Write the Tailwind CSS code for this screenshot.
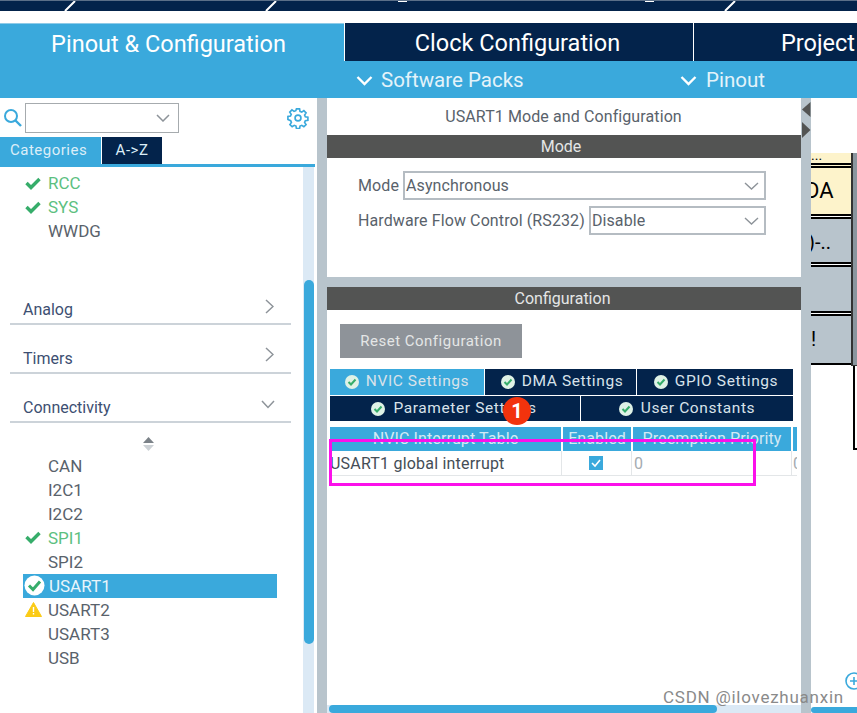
<!DOCTYPE html>
<html lang="en">

<head>
  <meta charset="UTF-8" />
  <meta name="viewport" content="width=device-width, initial-scale=1.0" />
  <script src="https://cdn.jsdelivr.net/npm/@tailwindcss/browser@4"></script>
  <title>Pinout &amp; Configuration</title>
</head>

<body class="w-[857px] h-[713px] overflow-hidden bg-white font-['Roboto',sans-serif] text-[#59626b] relative">
  <!-- top strip -->
  <div class="h-[11px] bg-[#03234b] border-t border-[#5b6f88]">
    <svg width="857" height="10" class="block">
      <path d="M65 10 L75 0 M266 10 L276 0 M725 10 L735 0" stroke="#fff" stroke-width="2" fill="none" />
      <rect x="398" y="0" width="9" height="1" fill="#fff" />
      <rect x="645" y="0" width="9" height="1" fill="#fff" />
    </svg>
  </div>
  <div class="h-[12px]"></div>

  <!-- main tabs -->
  <div class="flex h-[38px] text-[23.5px] leading-[40px]">
    <div class="w-[344px] bg-[#3aa9dc] text-white text-center border-t border-[#8fcbe8] pr-[7px]">Pinout &amp; Configuration</div>
    <div class="w-[349px] bg-[#03234b] text-white text-center border-l border-white pr-[3px]">Clock Configuration</div>
    <div class="flex-1 bg-[#03234b] text-white border-l border-white pl-[87px] whitespace-nowrap overflow-hidden">Project Manager</div>
  </div>
  <div class="h-[37px] pt-[2px] bg-[#3aa9dc] text-[#e4f3fa] text-[20.5px] leading-[35px] relative flex">
    <div class="flex items-center gap-[8px] ml-[356px] w-[324px]">
      <svg width="17" height="11" viewBox="0 0 17 11"><path d="M1.5 2 L8.5 9 L15.5 2" stroke="#fff" stroke-width="2.4" fill="none" /></svg>
      <span>Software Packs</span>
    </div>
    <div class="flex items-center gap-[9px]">
      <svg width="17" height="11" viewBox="0 0 17 11"><path d="M1.5 2 L8.5 9 L15.5 2" stroke="#fff" stroke-width="2.4" fill="none" /></svg>
      <span>Pinout</span>
    </div>
  </div>

  <div class="flex h-[615px]">
    <!-- left panel -->
    <div class="w-[317px] flex flex-col relative">
      <div class="h-[39px] flex items-center pl-[3px] pr-[8px]">
        <svg width="19" height="20" viewBox="0 0 19 20" class="mr-[3px]">
          <circle cx="8" cy="8" r="6" stroke="#3aa9dc" stroke-width="2" fill="none" />
          <path d="M12.5 12.5 L18 18" stroke="#3aa9dc" stroke-width="2.4" />
        </svg>
        <div class="w-[154px] h-[30px] border border-[#a6abae] flex items-center justify-end pr-[8px]">
          <svg width="14" height="8" viewBox="0 0 14 8"><path d="M1 1 L7 7 L13 1" stroke="#8d9399" stroke-width="1.5" fill="none" /></svg>
        </div>
        <svg width="22" height="22" viewBox="0 0 24 24" class="ml-auto" fill="none" stroke="#3aa9dc" stroke-width="1.8">
          <circle cx="12" cy="12" r="3.2" />
          <path d="M10.3 2h3.4l.5 2.8 1.9.8 2.3-1.6 2.4 2.4-1.6 2.3.8 1.9 2.8.5v3.4l-2.8.5-.8 1.9 1.6 2.3-2.4 2.4-2.3-1.6-1.9.8-.5 2.8h-3.4l-.5-2.8-1.9-.8-2.3 1.6-2.4-2.4 1.6-2.3-.8-1.9L1 13.7v-3.4l2.8-.5.8-1.9L3 5.6l2.4-2.4 2.3 1.6 1.9-.8z" />
        </svg>
      </div>
      <div class="flex h-[27px] text-[15px] leading-[27px] tracking-[0.5px] text-[#dceef8]">
        <div class="w-[101px] bg-[#3aa9dc] pl-[10px]">Categories</div>
        <div class="w-[61px] bg-[#03234b] border-l border-white text-center">A-&gt;Z</div>
      </div>
      <div class="h-[3px] w-[315px] bg-[#3aa9dc]"></div>

      <div class="flex-1 flex relative">
        <div class="flex-1 text-[17px]">
          <ul class="pt-[4px] leading-[24px] h-[109px]">
            <li class="relative pl-[48px] text-[#5cc07f]">
              <svg class="absolute left-[25px] top-[6px]" width="16" height="13" viewBox="0 0 16 13"><path d="M1.5 6 L6 10.5 L14.5 2" stroke="#36ad6a" stroke-width="3.4" fill="none" /></svg>RCC
            </li>
            <li class="relative pl-[48px] text-[#5cc07f]">
              <svg class="absolute left-[25px] top-[6px]" width="16" height="13" viewBox="0 0 16 13"><path d="M1.5 6 L6 10.5 L14.5 2" stroke="#36ad6a" stroke-width="3.4" fill="none" /></svg>SYS
            </li>
            <li class="pl-[48px]">WWDG</li>
          </ul>

          <div class="ml-[10px] w-[281px] h-[49px] border-b-2 border-[#ccd3d9] flex items-end justify-between pl-[13px] pr-[17px] text-[16px] leading-[26px] text-[#3d4f72]">
            <span>Analog</span>
            <svg class="mb-[9px]" width="9" height="15" viewBox="0 0 9 15"><path d="M1 1 L8 7.5 L1 14" stroke="#8d9399" stroke-width="1.5" fill="none" /></svg>
          </div>
          <div class="ml-[10px] w-[281px] h-[49px] border-b-2 border-[#ccd3d9] flex items-end justify-between pl-[13px] pr-[17px] text-[16px] leading-[26px] text-[#3d4f72]">
            <span>Timers</span>
            <svg class="mb-[10px]" width="9" height="15" viewBox="0 0 9 15"><path d="M1 1 L8 7.5 L1 14" stroke="#8d9399" stroke-width="1.5" fill="none" /></svg>
          </div>
          <div class="ml-[10px] w-[281px] h-[49px] border-b-2 border-[#ccd3d9] flex items-end justify-between pl-[13px] pr-[16px] text-[16px] leading-[26px] text-[#3d4f72]">
            <span>Connectivity</span>
            <svg class="mb-[12px]" width="14" height="9" viewBox="0 0 14 9"><path d="M1 1 L7 7.5 L13 1" stroke="#8d9399" stroke-width="1.5" fill="none" /></svg>
          </div>

          <svg class="ml-[143px] mt-[14px] block" width="11" height="15" viewBox="0 0 11 15">
            <path d="M5.5 0 L11 6 H0 Z" fill="#7b8288" />
            <path d="M5.5 14 L11 8 H0 Z" fill="#cdd2d6" />
          </svg>

          <ul class="leading-[24px] mt-[2px] w-[277px]">
            <li class="pl-[48px]">CAN</li>
            <li class="pl-[48px]">I2C1</li>
            <li class="pl-[48px]">I2C2</li>
            <li class="relative pl-[48px] text-[#5cc07f]">
              <svg class="absolute left-[25px] top-[5px]" width="16" height="13" viewBox="0 0 16 13"><path d="M1.5 6 L6 10.5 L14.5 2" stroke="#36ad6a" stroke-width="3.4" fill="none" /></svg>SPI1
            </li>
            <li class="pl-[48px]">SPI2</li>
            <li class="relative ml-[23px] pl-[26px] bg-[#3aa9dc] text-[#e8f5fb]">
              <svg class="absolute left-[1px] top-[1px]" width="21" height="21" viewBox="0 0 21 21">
                <circle cx="10.5" cy="10.5" r="10" fill="#fff" />
                <path d="M5 10.5 L9 14.5 L16 6.5" stroke="#36ad6a" stroke-width="3" fill="none" />
              </svg>USART1
            </li>
            <li class="relative pl-[48px]">
              <svg class="absolute left-[25px] top-[4px]" width="17" height="15" viewBox="0 0 17 15">
                <path d="M8.5 0.5 L16.5 14.5 H0.5 Z" fill="#fbcb16" stroke="#fbcb16" stroke-linejoin="round" />
                <rect x="7.8" y="5" width="1.4" height="5" fill="#fff" />
                <rect x="7.8" y="11" width="1.4" height="1.5" fill="#fff" />
              </svg>USART2
            </li>
            <li class="pl-[48px]">USART3</li>
            <li class="pl-[48px]">USB</li>
          </ul>
        </div>
        <!-- list scrollbar -->
        <div class="w-[11px] mr-[3px] bg-[#dbe9f5] relative">
          <div class="absolute top-[113px] left-[1px] w-[10px] h-[364px] rounded-[5px] bg-[#3aa9dc]"></div>
        </div>
      </div>
    </div>

    <!-- splitter -->
    <div class="w-[10px] bg-[#b8c4cc]"></div>

    <!-- center panel -->
    <div class="w-[474px] flex flex-col relative">
      <div class="h-[179px]">
        <div class="h-[37px] text-center text-[16px] leading-[37px] tracking-[0.1px] pr-[1px]">USART1 Mode and Configuration</div>
        <div class="h-[23px] bg-[#535453] text-center text-[#e4e6e6] text-[16px] leading-[23px] pr-[6px]">Mode</div>
        <div class="flex items-center h-[29px] mt-[13px] text-[16px] tracking-[0.1px] pl-[31px]">
          <span class="mr-[4px]">Mode</span>
          <div class="w-[363px] h-[29px] border-2 border-[#b5bcc2] flex items-center justify-between pl-[1px] pr-[5px]">
            <span>Asynchronous</span>
            <svg width="15" height="8" viewBox="0 0 15 8"><path d="M1 1 L7.5 7 L14 1" stroke="#8d9399" stroke-width="1.4" fill="none" /></svg>
          </div>
        </div>
        <div class="flex items-center h-[29px] mt-[6px] text-[16px] tracking-[0.1px] pl-[31px]">
          <span class="mr-[4px]">Hardware Flow Control (RS232)</span>
          <div class="w-[177px] h-[29px] border-2 border-[#b5bcc2] flex items-center justify-between pl-[1px] pr-[5px]">
            <span>Disable</span>
            <svg width="15" height="8" viewBox="0 0 15 8"><path d="M1 1 L7.5 7 L14 1" stroke="#8d9399" stroke-width="1.4" fill="none" /></svg>
          </div>
        </div>
      </div>
      <div class="h-[10px] bg-[#b8c4cc]"></div>
      <div class="h-[23px] bg-[#535453] text-center text-[#e4e6e6] text-[16px] leading-[23px] pr-[3px]">Configuration</div>

      <div class="h-[14px]"></div>
      <div class="ml-[13px] w-[182px] h-[34px] bg-[#8e9399] text-[#e4e6e6] text-[15px] leading-[34px] text-center tracking-[0.5px]">Reset Configuration</div>

      <!-- config tabs -->
      <div class="mt-[11px] ml-[3px] w-[463px] text-[15.5px] tracking-[0.6px] text-[#d8e2ea]">
        <div class="flex h-[26px]">
          <div class="w-[154px] bg-[#3aa9dc] flex items-center justify-center gap-[7px]">
            <svg width="14" height="14" viewBox="0 0 14 14"><circle cx="7" cy="7" r="7" fill="#dff2e6" /><path d="M3.5 7 L6 9.5 L10.5 4.5" stroke="#36ad6a" stroke-width="2" fill="none" /></svg>
            NVIC Settings
          </div>
          <div class="w-[152px] pl-[3px] bg-[#03234b] border-l border-white flex items-center justify-center gap-[7px]">
            <svg width="14" height="14" viewBox="0 0 14 14"><circle cx="7" cy="7" r="7" fill="#dff2e6" /><path d="M3.5 7 L6 9.5 L10.5 4.5" stroke="#36ad6a" stroke-width="2" fill="none" /></svg>
            DMA Settings
          </div>
          <div class="flex-1 pl-[2px] bg-[#03234b] border-l border-white flex items-center justify-center gap-[7px]">
            <svg width="14" height="14" viewBox="0 0 14 14"><circle cx="7" cy="7" r="7" fill="#dff2e6" /><path d="M3.5 7 L6 9.5 L10.5 4.5" stroke="#36ad6a" stroke-width="2" fill="none" /></svg>
            GPIO Settings
          </div>
        </div>
        <div class="flex h-[26px] border-t border-white">
          <div class="w-[250px] pr-[2px] bg-[#03234b] flex items-center justify-center gap-[8px]">
            <svg width="14" height="14" viewBox="0 0 14 14"><circle cx="7" cy="7" r="7" fill="#dff2e6" /><path d="M3.5 7 L6 9.5 L10.5 4.5" stroke="#36ad6a" stroke-width="2" fill="none" /></svg>
            Parameter Settings
          </div>
          <div class="flex-1 bg-[#03234b] border-l border-white flex items-center justify-center gap-[8px]">
            <svg width="14" height="14" viewBox="0 0 14 14"><circle cx="7" cy="7" r="7" fill="#dff2e6" /><path d="M3.5 7 L6 9.5 L10.5 4.5" stroke="#36ad6a" stroke-width="2" fill="none" /></svg>
            User Constants
          </div>
        </div>
      </div>

      <!-- interrupt table -->
      <div class="mt-[6px] ml-[3px] w-[467px] overflow-hidden text-[16px]">
        <div class="flex h-[24px] gap-[2px] bg-white text-[#d3e9f5] leading-[24px] text-center tracking-[0.1px] whitespace-nowrap">
          <div class="w-[231px] shrink-0 bg-[#3aa9dc]">NVIC Interrupt Table</div>
          <div class="w-[68px] shrink-0 bg-[#3aa9dc]">Enabled</div>
          <div class="w-[158px] shrink-0 bg-[#3aa9dc]">Preemption Priority</div>
          <div class="flex-1 bg-[#3aa9dc]"></div>
        </div>
        <div class="flex h-[25px] border-b border-[#e3e6e8] leading-[25px]">
          <div class="w-[232px] shrink-0 border-r border-[#e3e6e8] text-[#444d56] tracking-[0.2px] whitespace-nowrap">USART1 global interrupt</div>
          <div class="w-[70px] shrink-0 border-r border-[#e3e6e8] flex items-center justify-center pr-[2px]">
            <svg width="14" height="14" viewBox="0 0 14 14"><rect width="14" height="14" fill="#3aa9dc" /><path d="M3 7 L6 10 L11 4" stroke="#fff" stroke-width="1.6" fill="none" /></svg>
          </div>
          <div class="w-[160px] shrink-0 border-r border-[#e3e6e8] pl-[2px] text-[#a4abb1]">0</div>
          <div class="pl-[1px] text-[#a4abb1]">0</div>
        </div>
      </div>

      <!-- horizontal scrollbar -->
      <div class="absolute bottom-0 left-0 right-0 h-[8px] bg-[#dbe9f5]">
        <div class="ml-[2px] w-[388px] h-[8px] rounded-[4px] bg-[#3aa9dc]"></div>
      </div>
    </div>

    <!-- splitter with collapse arrows -->
    <div class="w-[10px] bg-[#b8c4cc] relative">
      <svg class="absolute top-0 left-0" width="10" height="42" viewBox="0 0 10 42">
        <path d="M9.5 4 L1 11.5 L9.5 19 Z" fill="#535453" />
        <path d="M1 24 L9.5 32 L1 40 Z" fill="#535453" />
      </svg>
    </div>

    <!-- pinout canvas -->
    <div class="flex-1 relative overflow-hidden">
      <div class="mt-[55px] flex text-[22px] text-black">
        <div class="w-[40px] leading-none">
          <div class="h-[10px] bg-[#fdf3cb] text-[14px] leading-[4px] overflow-hidden">...</div>
          <div class="h-[5px] border-y-2 border-black bg-[#fdf3cb]"></div>
          <div class="h-[46px] bg-[#fdf3cb] leading-[46px] -indent-[6px] overflow-hidden">DA</div>
          <div class="h-[5px] border-y-2 border-black"></div>
          <div class="h-[43px] bg-[#b8c4cc] leading-[46px] -indent-[3px] overflow-hidden text-[20px]">)-..</div>
          <div class="h-[5px] border-y-2 border-black"></div>
          <div class="h-[44px] bg-[#b8c4cc]"></div>
          <div class="h-[5px] border-y-2 border-black"></div>
          <div class="h-[47px] bg-[#b8c4cc] leading-[46px] overflow-hidden text-[20px]">!</div>
          <div class="h-[2px] bg-black"></div>
        </div>
        <div class="w-[2px] h-[213px] bg-[#333]"></div>
        <div class="w-[4px] h-[213px] bg-[#8a969e] border-b border-[#333]"></div>
      </div>
      <div class="ml-[42px] w-[4px] h-[84px] border-l-2 border-b-2 border-black"></div>
      <svg class="absolute right-[-6px] top-[574px]" width="18" height="18" viewBox="0 0 18 18">
        <circle cx="9" cy="9" r="8" fill="none" stroke="#3aa9dc" stroke-width="1.6" />
        <path d="M5 9 H13 M9 5 V13" stroke="#3aa9dc" stroke-width="1.6" />
      </svg>
      <div class="absolute bottom-0 left-0 right-0 h-[6px] rounded-l-[3px] bg-[#3aa9dc]"></div>
    </div>
  </div>

  <!-- overlays: annotation and watermark -->
  <div class="absolute left-[503px] top-[397px] w-[28px] h-[28px] rounded-full bg-[#f2330d] text-white text-[20px] font-bold leading-[29px] text-center">1</div>
  <div class="absolute left-[329px] top-[439px] w-[427px] h-[47px] border-[3px] border-[#fb10ea]"></div>
  <div class="absolute left-[663px] top-[685px] text-[17px] text-[#8a8a8a] tracking-[0.75px] whitespace-nowrap">CSDN @ilovezhuanxin</div>
</body>

</html>
